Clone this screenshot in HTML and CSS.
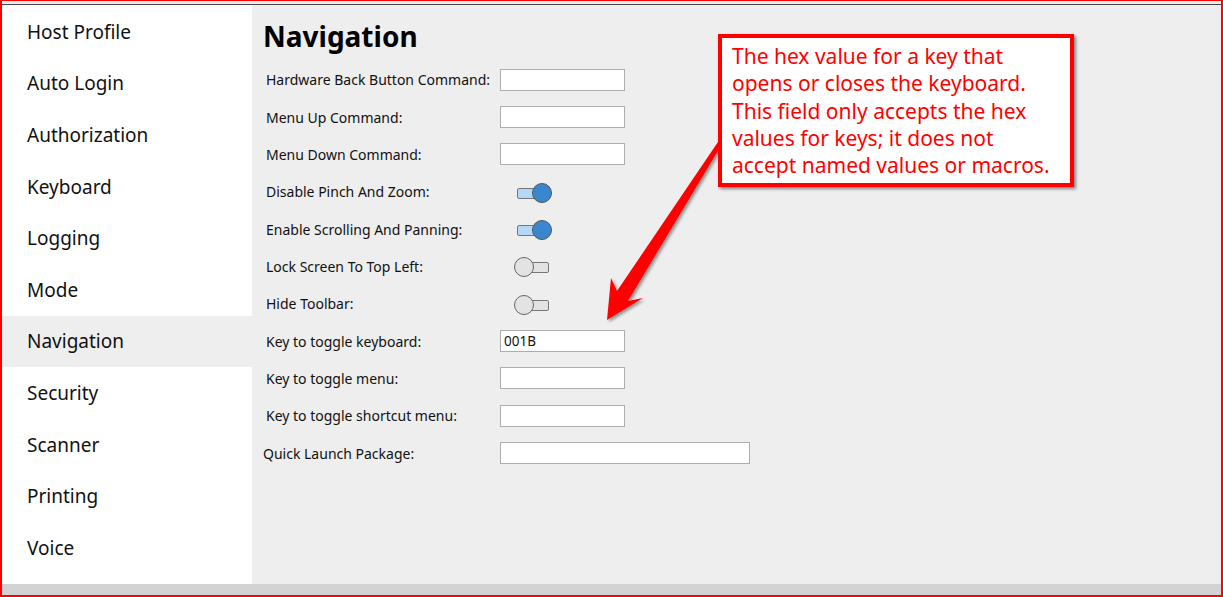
FILE: index.html
```html
<!DOCTYPE html>
<html lang="en">
<head>
  <meta charset="UTF-8">
  <meta name="viewport" content="width=device-width, initial-scale=1.0">
  <title>Navigation</title>
  <link rel="stylesheet" href="styles.css">
</head>
<body>
  <div class="frame">
    <div class="topline"></div>
    <div class="window">
      <ul class="sidebar">
        <li class="sideItem">Host Profile</li>
        <li class="sideItem">Auto Login</li>
        <li class="sideItem">Authorization</li>
        <li class="sideItem">Keyboard</li>
        <li class="sideItem">Logging</li>
        <li class="sideItem">Mode</li>
        <li class="sideItem active">Navigation</li>
        <li class="sideItem">Security</li>
        <li class="sideItem">Scanner</li>
        <li class="sideItem">Printing</li>
        <li class="sideItem">Voice</li>
      </ul>
      <div class="panel">
        <h1 class="title">Navigation</h1>
        <div class="form">
          <label class="label">Hardware Back Button Command:</label>
          <div class="field"><input class="text" type="text"></div>

          <label class="label">Menu Up Command:</label>
          <div class="field"><input class="text" type="text"></div>

          <label class="label">Menu Down Command:</label>
          <div class="field"><input class="text" type="text"></div>

          <label class="label">Disable Pinch And Zoom:</label>
          <div class="field"><span class="toggle on"></span></div>

          <label class="label">Enable Scrolling And Panning:</label>
          <div class="field"><span class="toggle on"></span></div>

          <label class="label">Lock Screen To Top Left:</label>
          <div class="field"><span class="toggle"></span></div>

          <label class="label">Hide Toolbar:</label>
          <div class="field"><span class="toggle"></span></div>

          <label class="label">Key to toggle keyboard:</label>
          <div class="field"><input class="text" type="text" value="001B"></div>

          <label class="label">Key to toggle menu:</label>
          <div class="field"><input class="text" type="text"></div>

          <label class="label">Key to toggle shortcut menu:</label>
          <div class="field"><input class="text" type="text"></div>

          <label class="label wide">Quick Launch Package:</label>
          <div class="field"><input class="text long" type="text"></div>
        </div>
      </div>
    </div>
    <div class="statusbar"></div>

    <!-- annotation on top of the screenshot -->
    <svg class="arrow" width="1223" height="597" viewBox="0 0 1223 597">
      <defs>
        <filter id="shadow" x="-20%" y="-20%" width="140%" height="140%">
          <feDropShadow dx="2" dy="2" stdDeviation="1.5" flood-color="#000" flood-opacity="0.4"/>
        </filter>
      </defs>
      <polygon points="720,139 722,144 628,301 643,298 607,320 611,278 617,291" fill="#ff0000" filter="url(#shadow)"/>
    </svg>
    <div class="callout">
      The hex value for a key that<br>
      opens or closes the keyboard.<br>
      This field only accepts the hex<br>
      values for keys; it does not<br>
      accept named values or macros.
    </div>
  </div>
</body>
</html>
```
FILE: styles.css
```css
*{
  box-sizing: border-box;
}
body{
  margin: 0;
  font-family: "Noto Sans", "Open Sans", sans-serif;
  color: #000;
}
.frame{
  position: relative;
  width: 1223px;
  height: 597px;
  border: 2px solid #ff0000;
  border-top-width: 1px;
  display: flex;
  flex-direction: column;
  background: #eeeeee;
}
.topline{
  height: 4px;
  background: #efefef;
  border-bottom: 1px solid #454545;
}
.window{
  display: flex;
  height: 579px;
}
.sidebar{
  list-style: none;
  margin: 0;
  padding: 1px 0 0 0;
  width: 250px;
  background: #fff;
}
.sideItem{
  height: 51.6px;
  display: flex;
  align-items: center;
  padding-left: 25px;
  font-size: 19px;
  color: #111;
}
.sideItem.active{
  background: #eeeeee;
}
.panel{
  flex: 1;
  padding: 14px 0 0 11px;
}
.title{
  margin: 0;
  font-size: 28px;
  line-height: 34px;
  font-weight: 700;
}
.form{
  display: grid;
  grid-template-columns: 237px auto;
  grid-auto-rows: 37.35px;
  align-items: center;
  margin-top: 8px;
}
.label{
  padding-left: 3px;
  font-size: 14px;
  color: #111;
}
.label.wide{
  padding-left: 0;
}
.field{
  display: flex;
  align-items: center;
}
.text{
  width: 125px;
  height: 22px;
  border: 1px solid #adadad;
  background: #fff;
  padding: 0 3px;
  font-family: "Noto Sans", sans-serif;
  font-size: 13.5px;
  color: #111;
  outline: none;
}
.text.long{
  width: 250px;
}
.toggle{
  position: relative;
  display: block;
  width: 36px;
  height: 18px;
  margin-left: 14px;
}
.toggle::before{
  content: "";
  position: absolute;
  left: 15px;
  top: 5px;
  width: 18px;
  height: 9px;
  border: 1px solid #777;
  border-radius: 2px;
  background: #e3e3e3;
}
.toggle::after{
  content: "";
  position: absolute;
  left: 0;
  top: 0;
  width: 18px;
  height: 18px;
  border: 1px solid #666;
  border-radius: 50%;
  background: #e3e3e3;
}
.toggle.on::before{
  left: 3px;
  width: 20px;
  background: #b3d7f7;
}
.toggle.on::after{
  left: 18px;
  background: #3a87d0;
  border-color: #555;
}
.statusbar{
  height: 11px;
  background: #d3d3d3;
}
.arrow{
  position: absolute;
  left: -2px;
  top: -1px;
  pointer-events: none;
}
.callout{
  position: absolute;
  left: 716px;
  top: 33px;
  width: 356px;
  height: 153px;
  border: 4px solid #ff0000;
  background: #fff;
  box-shadow: 2px 2px 3px rgba(0,0,0,0.45);
  padding: 5px 0 0 10px;
  color: #ff0000;
  font-family: "Noto Sans", sans-serif;
  font-size: 21px;
  line-height: 27.3px;
  white-space: nowrap;
}
```
